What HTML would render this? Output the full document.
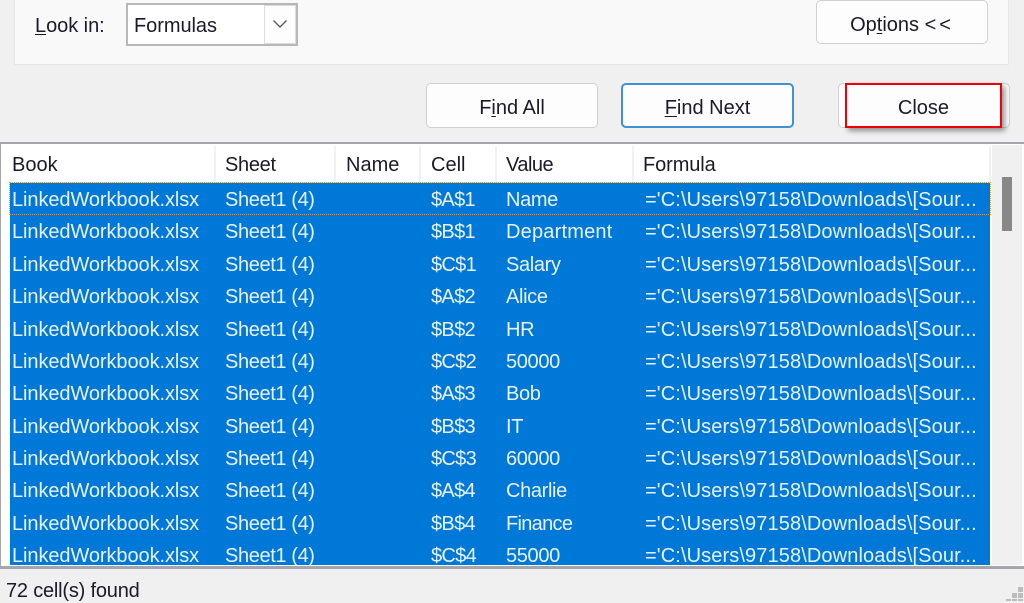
<!DOCTYPE html>
<html>
<head>
<meta charset="utf-8">
<style>
html,body{margin:0;padding:0}
body{width:1024px;height:601px;position:relative;overflow:hidden;background:#f0f0f0;font-family:"Liberation Sans",sans-serif;font-size:20px;color:#1a1a2a}
.a{position:absolute;white-space:nowrap}
.t{position:absolute;white-space:nowrap;line-height:24px;height:24px}
.btn{position:absolute;box-sizing:border-box;background:#fdfdfd;border:1px solid #d0d0d0;border-radius:5px;text-align:center}
u{text-decoration-thickness:1px;text-underline-offset:2px}
.r{position:absolute;left:0;width:1024px;height:32px;color:#e8f2fc}
.r span{position:absolute;top:1px;white-space:nowrap;line-height:32px}
.c1{left:12px;letter-spacing:-.08px}.c2{left:225px;letter-spacing:-.38px}.c3{left:431px;letter-spacing:-.7px}.c4{left:506px;letter-spacing:-.35px}.c5{left:645px;letter-spacing:.11px}
.h{position:absolute;top:146px;width:2px;height:37px;background:#f1f1f1}
</style>
</head>
<body>
<div class="a" style="left:14px;top:-2px;width:993px;height:65px;background:#f9f9f9;border:1px solid #e6e6e6;box-sizing:content-box"></div>
<div class="t" style="left:35px;top:14px;letter-spacing:-.05px"><u>L</u>ook in:</div>
<div class="a" style="left:126px;top:3px;width:172px;height:43px;box-sizing:border-box;background:#fff;border:2px solid #b8b8b8"></div>
<div class="t" style="left:134px;top:14px;letter-spacing:-.05px">Formulas</div>
<div class="a" style="left:264px;top:5px;width:32px;height:39px;box-sizing:border-box;background:#fdfdfd;border:1px solid #dcdcdc"></div>
<svg class="a" style="left:272px;top:18px" width="16" height="12" viewBox="0 0 16 12"><path d="M1.5 2.5 L8 9 L14.5 2.5" fill="none" stroke="#555" stroke-width="1.3"/></svg>
<div class="btn" style="left:816px;top:0;width:172px;height:44px;line-height:49px">Op<u>t</u>ions <span style="letter-spacing:3px">&lt;&lt;</span></div>

<div class="btn" style="left:426px;top:83px;width:172px;height:45px;line-height:49px">F<u>i</u>nd All</div>
<div class="btn" style="left:621px;top:83px;width:173px;height:45px;border:2px solid #3f90d4;line-height:47px"><u>F</u>ind Next</div>
<div class="btn" style="left:838px;top:83px;width:172px;height:45px;"></div>
<div class="a" style="left:845px;top:83px;width:157px;height:45px;box-sizing:border-box;background:#fdfdfd;border:2px solid #f00000;box-shadow:3px 3px 5px rgba(0,0,0,.4)"></div>
<div class="a" style="left:845px;top:83px;width:157px;height:45px;text-align:center;line-height:50px">Close</div>

<div class="a" style="left:0;top:142px;width:1024px;height:2px;background:#a3a6aa"></div>
<div class="a" style="left:0;top:144px;width:1px;height:423px;background:#a3a6aa"></div>
<div class="a" style="left:1px;top:144px;width:1023px;height:423px;background:#fff"></div>
<div class="a" style="left:992px;top:145px;width:30px;height:420px;background:#f0f0f0"></div>
<div class="a" style="left:1002px;top:177px;width:10px;height:54px;background:#888"></div>
<div class="h" style="left:214px"></div>
<div class="h" style="left:334px"></div>
<div class="h" style="left:419px"></div>
<div class="h" style="left:495px"></div>
<div class="h" style="left:632px"></div>
<div class="h" style="left:989px"></div>
<div class="t" style="left:12px;top:153px">Book</div>
<div class="t" style="left:225px;top:153px;letter-spacing:-.3px">Sheet</div>
<div class="t" style="left:346px;top:153px">Name</div>
<div class="t" style="left:431px;top:153px">Cell</div>
<div class="t" style="left:506px;top:153px;letter-spacing:-.5px">Value</div>
<div class="t" style="left:643px;top:153px;letter-spacing:-.1px">Formula</div>

<div class="a" style="left:10px;top:183px;width:980px;height:382px;background:#0078d7"></div>
<div class="a" style="left:9px;top:182px;width:980px;height:31px;border:1px dotted #f09030"></div>

<div class="r" style="top:183px"><span class="c1">LinkedWorkbook.xlsx</span><span class="c2">Sheet1 (4)</span><span class="c3">$A$1</span><span class="c4">Name</span><span class="c5">='C:\Users\97158\Downloads\[Sour...</span></div>
<div class="r" style="top:215px"><span class="c1">LinkedWorkbook.xlsx</span><span class="c2">Sheet1 (4)</span><span class="c3">$B$1</span><span class="c4" style="letter-spacing:.2px">Department</span><span class="c5">='C:\Users\97158\Downloads\[Sour...</span></div>
<div class="r" style="top:248px"><span class="c1">LinkedWorkbook.xlsx</span><span class="c2">Sheet1 (4)</span><span class="c3">$C$1</span><span class="c4">Salary</span><span class="c5">='C:\Users\97158\Downloads\[Sour...</span></div>
<div class="r" style="top:280px"><span class="c1">LinkedWorkbook.xlsx</span><span class="c2">Sheet1 (4)</span><span class="c3">$A$2</span><span class="c4">Alice</span><span class="c5">='C:\Users\97158\Downloads\[Sour...</span></div>
<div class="r" style="top:313px"><span class="c1">LinkedWorkbook.xlsx</span><span class="c2">Sheet1 (4)</span><span class="c3">$B$2</span><span class="c4">HR</span><span class="c5">='C:\Users\97158\Downloads\[Sour...</span></div>
<div class="r" style="top:345px"><span class="c1">LinkedWorkbook.xlsx</span><span class="c2">Sheet1 (4)</span><span class="c3">$C$2</span><span class="c4">50000</span><span class="c5">='C:\Users\97158\Downloads\[Sour...</span></div>
<div class="r" style="top:377px"><span class="c1">LinkedWorkbook.xlsx</span><span class="c2">Sheet1 (4)</span><span class="c3">$A$3</span><span class="c4">Bob</span><span class="c5">='C:\Users\97158\Downloads\[Sour...</span></div>
<div class="r" style="top:410px"><span class="c1">LinkedWorkbook.xlsx</span><span class="c2">Sheet1 (4)</span><span class="c3">$B$3</span><span class="c4">IT</span><span class="c5">='C:\Users\97158\Downloads\[Sour...</span></div>
<div class="r" style="top:442px"><span class="c1">LinkedWorkbook.xlsx</span><span class="c2">Sheet1 (4)</span><span class="c3">$C$3</span><span class="c4">60000</span><span class="c5">='C:\Users\97158\Downloads\[Sour...</span></div>
<div class="r" style="top:474px"><span class="c1">LinkedWorkbook.xlsx</span><span class="c2">Sheet1 (4)</span><span class="c3">$A$4</span><span class="c4">Charlie</span><span class="c5">='C:\Users\97158\Downloads\[Sour...</span></div>
<div class="r" style="top:507px"><span class="c1">LinkedWorkbook.xlsx</span><span class="c2">Sheet1 (4)</span><span class="c3">$B$4</span><span class="c4" style="letter-spacing:-.7px">Finance</span><span class="c5">='C:\Users\97158\Downloads\[Sour...</span></div>
<div class="r" style="top:539px;height:26px;overflow:hidden"><span class="c1">LinkedWorkbook.xlsx</span><span class="c2">Sheet1 (4)</span><span class="c3">$C$4</span><span class="c4">55000</span><span class="c5">='C:\Users\97158\Downloads\[Sour...</span></div>

<div class="a" style="left:0;top:566px;width:1024px;height:3px;background:#a3a6aa"></div>
<div class="a" style="left:0;top:569px;width:1024px;height:32px;background:#f0f0f0"></div>
<div class="t" style="left:6px;top:579px;letter-spacing:-.2px">72 cell(s) found</div>
<svg class="a" style="left:1004px;top:583px" width="20" height="18"><g fill="#bcbcbc"><rect x="14" y="4" width="5" height="5"/><rect x="8" y="10" width="5" height="5"/><rect x="14" y="10" width="5" height="5"/><rect x="2" y="16" width="5" height="2"/><rect x="8" y="16" width="5" height="2"/><rect x="14" y="16" width="5" height="2"/></g></svg>
</body>
</html>
